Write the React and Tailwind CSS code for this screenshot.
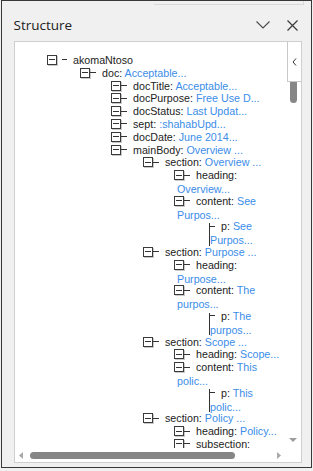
import React from "react";

const PL = ["pl-[32px]", "pl-[65px]", "pl-[96px]", "pl-[128px]", "pl-[159px]", "pl-[194px]"];

const nodes = [
  { l: 0, name: "akomaNtoso", root: true },
  { l: 1, name: "doc", value: "Acceptable..." },
  { l: 2, name: "docTitle", value: "Acceptable..." },
  { l: 2, name: "docPurpose", value: "Free Use D..." },
  { l: 2, name: "docStatus", value: "Last Updat..." },
  { l: 2, name: "sept", value: ":shahabUpd..." },
  { l: 2, name: "docDate", value: "June 2014..." },
  { l: 2, name: "mainBody", value: "Overview ..." },
  { l: 3, name: "section", value: "Overview ..." },
  { l: 4, name: "heading", wrap: "Overview..." },
  { l: 4, name: "content", value: "See", wrap: "Purpos..." },
  { l: 5, name: "p", value: "See", wrap: "Purpos...", leaf: true },
  { l: 3, name: "section", value: "Purpose ..." },
  { l: 4, name: "heading", wrap: "Purpose..." },
  { l: 4, name: "content", value: "The", wrap: "purpos..." },
  { l: 5, name: "p", value: "The", wrap: "purpos...", leaf: true },
  { l: 3, name: "section", value: "Scope ..." },
  { l: 4, name: "heading", value: "Scope..." },
  { l: 4, name: "content", value: "This", wrap: "polic..." },
  { l: 5, name: "p", value: "This", wrap: "polic...", leaf: true },
  { l: 3, name: "section", value: "Policy ..." },
  { l: 4, name: "heading", value: "Policy..." },
  { l: 4, name: "subsection" },
];

function Box() {
  return (
    <span className="flex items-center justify-center w-[10px] h-[10px] shrink-0 border border-[#3a3a3a] bg-white shadow-[1px_1px_0_#c8c8c8]">
      <span className="w-[6px] h-px bg-[#333]" />
    </span>
  );
}

function Label({ name, value, root }) {
  return (
    <span className="whitespace-nowrap leading-[12.8px]">
      <span className="text-[#1c1c1c]">{root ? name : name + ":"}</span>
      {value && <span className="text-[#3b8de8]"> {value}</span>}
    </span>
  );
}

function Node({ n }) {
  if (n.leaf) {
    return (
      <div className={PL[n.l]}>
        <div className="flex">
          <div className="w-px mt-[3px] bg-[#333] shrink-0" />
          <div>
            <div className="flex items-center h-[12.8px]">
              <span className="w-[5px] h-px bg-[#333]" />
              <span className="ml-[6px]">
                <Label name={n.name} value={n.value} />
              </span>
            </div>
            {n.wrap && (
              <div className="h-[12.8px] leading-[12.8px] mt-[1.5px] -mb-[1.5px] whitespace-nowrap text-[#3b8de8]">
                {n.wrap}
              </div>
            )}
          </div>
        </div>
      </div>
    );
  }
  return (
    <div className={PL[n.l]}>
      <div className="flex items-center h-[12.8px]">
        <Box />
        {n.root ? (
          <>
            <span className="ml-[5px] w-[5px] h-px bg-[#333]" />
            <span className="ml-[6px]">
              <Label name={n.name} root />
            </span>
          </>
        ) : (
          <>
            <span className="w-[6px] h-px bg-[#333]" />
            <span className="ml-[6px]">
              <Label name={n.name} value={n.value} />
            </span>
          </>
        )}
      </div>
      {n.wrap && (
        <div className="pl-[3px] h-[12.8px] leading-[12.8px] mt-[1.5px] -mb-[1.5px] whitespace-nowrap text-[#3b8de8]">
          {n.wrap}
        </div>
      )}
    </div>
  );
}

export default function App() {
  return (
    <div className="w-[313px] h-[471px] bg-[#f0f0f0] overflow-hidden">
      <div className="relative ml-px w-[311px] h-[468px] border border-[#383838] flex flex-col">
        <div className="absolute top-0 right-[7px] w-[150px] h-[4px] border-b border-r border-[#d9d9d9]" />
        <div className="h-[40px] pt-[8px] flex items-center pl-[11.5px] pr-[13px]">
          <span
            className="text-[13.5px] leading-[18px] text-[#222]"
            style={{ fontFamily: '"Open Sans", "Noto Sans", sans-serif' }}
          >
            Structure
          </span>
          <div className="ml-auto flex items-center">
            <svg width="14" height="8" viewBox="0 0 14 8" className="block">
              <path d="M0.5 0.5 L7 7 L13.5 0.5" fill="none" stroke="#4a4a4a" strokeWidth="1.1" />
            </svg>
            <svg width="11" height="11" viewBox="0 0 11 11" className="block ml-[17px]">
              <path d="M0.5 0.5 L10.5 10.5 M10.5 0.5 L0.5 10.5" fill="none" stroke="#3a3a3a" strokeWidth="1.2" />
            </svg>
          </div>
        </div>
        <div
          className="ml-[12px] w-[288px] h-[422px] border border-[#cfcfcf] bg-white flex flex-col"
          style={{ fontFamily: '"Liberation Sans", Arial, sans-serif' }}
        >
          <div className="flex h-[406px]">
            <div className="w-[272px] h-full overflow-hidden pt-[11.6px] text-[10.7px]">
              {nodes.map((n, i) => (
                <Node key={i} n={n} />
              ))}
            </div>
            <div className="w-[14px] h-full flex flex-col">
              <div className="h-[40px] border-l border-b border-[#c8c8c8] bg-white flex items-center justify-center">
                <svg width="5" height="8" viewBox="0 0 5 8" className="block">
                  <path d="M4 0.5 L1 4 L4 7.5" fill="none" stroke="#333" strokeWidth="1" />
                </svg>
              </div>
              <div className="ml-[3px] w-[7px] h-[21px] bg-[#868686] rounded-b-[4px]" />
              <svg width="8" height="4" viewBox="0 0 8 4" className="block mt-auto mb-[6px] ml-[2px]">
                <path d="M0 0 L8 0 L4 4 Z" fill="#9c9c9c" />
              </svg>
            </div>
          </div>
          <div className="flex h-[14px]">
            <div className="w-[272px] flex items-center pl-[4px] pr-[6px]">
              <svg width="4" height="7" viewBox="0 0 4 7" className="block">
                <path d="M4 0 L4 7 L0 3.5 Z" fill="#a8a8a8" />
              </svg>
              <div className="ml-[7px] w-[205px] h-[7px] rounded-full bg-[#868686]" />
              <svg width="4" height="7" viewBox="0 0 4 7" className="block ml-auto">
                <path d="M0 0 L0 7 L4 3.5 Z" fill="#a8a8a8" />
              </svg>
            </div>
            <div className="w-[14px]" />
          </div>
        </div>
      </div>
    </div>
  );
}
